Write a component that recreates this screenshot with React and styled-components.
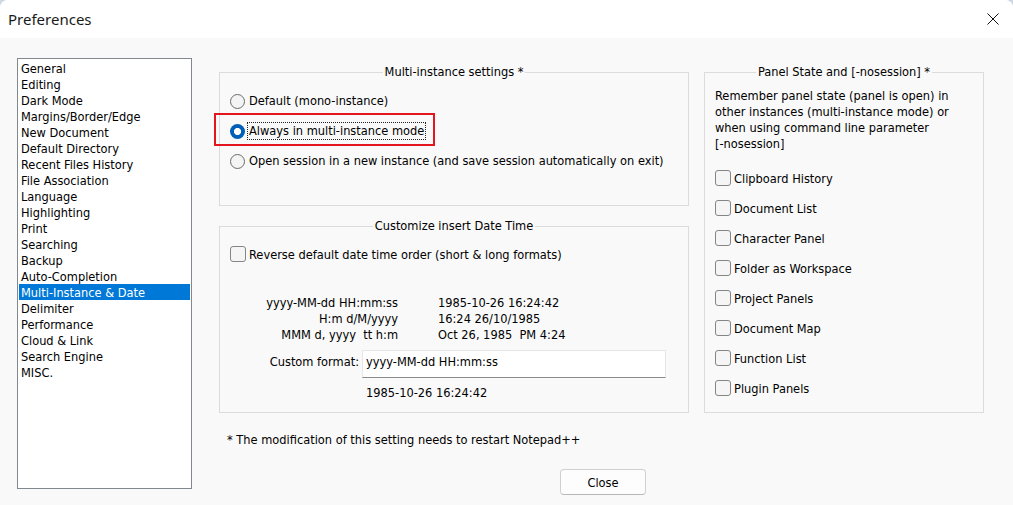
import React from 'react'
import styled, { createGlobalStyle, css } from 'styled-components'

const GlobalStyle = createGlobalStyle`
  html, body {
    margin: 0;
    padding: 0;
    background: #cfd8e0;
    overflow: hidden;
  }
  * {
    box-sizing: border-box;
  }
`

const Window = styled.div`
  width: 1013px;
  height: 505px;
  display: flex;
  flex-direction: column;
  background: #f9f9f9;
  border-radius: 8px 8px 0 0;
  overflow: hidden;
  font-family: "DejaVu Sans Condensed", "DejaVu Sans", Tahoma, sans-serif;
  font-stretch: condensed;
  font-size: 12.7px;
  color: #000;
`

const TitleBar = styled.div`
  height: 38px;
  flex-shrink: 0;
  background: #fff;
  display: flex;
  align-items: center;
  justify-content: space-between;
  padding-left: 8px;
`

const TitleText = styled.span`
  font-family: "Noto Sans", "Open Sans", sans-serif;
  font-stretch: normal;
  font-size: 15px;
  color: #1a1a1a;
`

const CloseCross = styled.div`
  width: 40px;
  height: 38px;
  display: flex;
  align-items: center;
  justify-content: center;
`

const Main = styled.div`
  flex: 1;
  display: flex;
  align-items: flex-start;
  gap: 27px;
  padding: 20px 0 0 17px;
`

const PageList = styled.ul`
  width: 175px;
  height: 431px;
  flex-shrink: 0;
  margin: 0;
  padding: 1px;
  list-style: none;
  background: #fff;
  border: 1px solid #828790;
`

const PageItem = styled.li`
  height: 16px;
  line-height: 18px;
  padding-left: 2px;
  white-space: nowrap;
  overflow: hidden;
  ${p => p.$selected && css`
    background: #0078d7;
    color: #fff;
  `}
`

const Settings = styled.div`
  width: 765px;
  margin-top: 7px;
  display: flex;
  flex-direction: column;
`

const Groups = styled.div`
  display: grid;
  grid-template-columns: 470px 280px;
  grid-template-rows: 141px 194px;
  column-gap: 15px;
  row-gap: 13px;
`

const GroupBox = styled.fieldset`
  margin: 0;
  min-width: 0;
  padding: ${p => p.$pad || '12px 10px 0'};
  border: 1px solid #dcdcdc;
  display: flex;
  flex-direction: column;
  align-items: flex-start;
  ${p => p.$tall && css`
    grid-column: 2;
    grid-row: 1 / span 2;
  `}
`

const GroupTitle = styled.legend`
  margin: 0 auto;
  padding: 0 2px;
  line-height: 14px;
`

const Options = styled.div`
  display: flex;
  flex-direction: column;
  gap: 12px;
  padding-top: 1px;
`

const OptionRow = styled.label`
  position: relative;
  align-self: flex-start;
  display: flex;
  align-items: center;
  gap: 2px;
  height: 18px;
  ${p => p.$marked && css`
    &::after {
      content: '';
      position: absolute;
      left: -16px;
      top: -9px;
      right: -9px;
      bottom: -6px;
      border: 2px solid #e3161f;
      pointer-events: none;
    }
  `}
`

const Radio = styled.span`
  width: 15px;
  height: 15px;
  border-radius: 50%;
  flex-shrink: 0;
  ${p => p.$checked
    ? css`
      background: radial-gradient(circle, #fff 0 3.2px, #005fb8 3.9px);
    `
    : css`
      border: 1px solid #6b6b6b;
      background: #f4f4f4;
    `}
`

const OptionText = styled.span`
  padding: 0 1px;
  line-height: 16px;
  white-space: nowrap;
  border: 1px dotted ${p => (p.$focused ? '#222' : 'transparent')};
`

const CheckRow = styled.label`
  display: flex;
  align-items: center;
  gap: 3px;
  height: 18px;
  white-space: nowrap;
`

const CheckBox = styled.span`
  width: 16px;
  height: 16px;
  flex-shrink: 0;
  border: 1px solid #858585;
  border-radius: 3px;
  background: #f5f5f5;
`

const Formats = styled.div`
  display: grid;
  grid-template-columns: 168px auto;
  column-gap: 40px;
  margin-top: 32px;
  line-height: 16px;
`

const FormatPattern = styled.span`
  text-align: right;
  white-space: pre;
`

const FormatSample = styled.span`
  white-space: pre;
`

const CustomRow = styled.div`
  display: flex;
  align-items: flex-start;
  gap: 3px;
  margin-top: 7px;
`

const CustomLabel = styled.span`
  width: 129px;
  padding-top: 4px;
  line-height: 16px;
  text-align: right;
  white-space: nowrap;
`

const EditBox = styled.div`
  width: 304px;
  height: 28px;
  padding: 3px 3px 0;
  line-height: 16px;
  background: #fff;
  border: 1px solid #e6e6e6;
  border-bottom-color: #8a8a8a;
`

const Preview = styled.div`
  margin: 7px 0 0 136px;
  line-height: 16px;
`

const Description = styled.p`
  width: 255px;
  margin: 1px 0 0;
  line-height: 16px;
`

const NoBreak = styled.span`
  white-space: nowrap;
`

const PanelChecks = styled.div`
  display: flex;
  flex-direction: column;
  gap: 12px;
  margin-top: 17px;
`

const Note = styled.p`
  margin: 19px 0 0 8px;
  line-height: 16px;
`

const DialogButton = styled.button`
  align-self: center;
  margin: 21px 0 0 3px;
  width: 86px;
  height: 26px;
  padding: 0;
  font: inherit;
  color: #000;
  background: #fdfdfd;
  border: 1px solid #d0d0d0;
  border-bottom-color: #b8b8b8;
  border-radius: 4px;
`

const pages = [
  'General', 'Editing', 'Dark Mode', 'Margins/Border/Edge', 'New Document',
  'Default Directory', 'Recent Files History', 'File Association', 'Language',
  'Highlighting', 'Print', 'Searching', 'Backup', 'Auto-Completion',
  'Multi-Instance & Date', 'Delimiter', 'Performance', 'Cloud & Link',
  'Search Engine', 'MISC.',
]

const formats = [
  ['yyyy-MM-dd HH:mm:ss', '1985-10-26 16:24:42'],
  ['H:m d/M/yyyy', '16:24 26/10/1985'],
  ['MMM d, yyyy  tt h:m', 'Oct 26, 1985  PM 4:24'],
]

const panels = [
  'Clipboard History', 'Document List', 'Character Panel', 'Folder as Workspace',
  'Project Panels', 'Document Map', 'Function List', 'Plugin Panels',
]

const App = () => {
  return (
    <Window>
      <GlobalStyle />
      <TitleBar>
        <TitleText>Preferences</TitleText>
        <CloseCross>
          <svg width="12" height="12" viewBox="0 0 12 12">
            <path d="M0.5 0.5 L11.5 11.5 M11.5 0.5 L0.5 11.5" stroke="#111" strokeWidth="1" fill="none" />
          </svg>
        </CloseCross>
      </TitleBar>
      <Main>
        <PageList>
          {pages.map(p => (
            <PageItem key={p} $selected={p === 'Multi-Instance & Date'}>{p}</PageItem>
          ))}
        </PageList>
        <Settings>
          <Groups>
            <GroupBox>
              <GroupTitle>Multi-instance settings *</GroupTitle>
              <Options>
                <OptionRow>
                  <Radio />
                  <OptionText>Default (mono-instance)</OptionText>
                </OptionRow>
                <OptionRow $marked>
                  <Radio $checked />
                  <OptionText $focused>Always in multi-instance mode</OptionText>
                </OptionRow>
                <OptionRow>
                  <Radio />
                  <OptionText>Open session in a new instance (and save session automatically on exit)</OptionText>
                </OptionRow>
              </Options>
            </GroupBox>
            <GroupBox $tall $pad="8px 10px 0">
              <GroupTitle>Panel State and [-nosession] *</GroupTitle>
              <Description>
                Remember panel state (panel is open) in other instances (multi-instance mode) or when using command line parameter <NoBreak>[-nosession]</NoBreak>
              </Description>
              <PanelChecks>
                {panels.map(p => (
                  <CheckRow key={p}>
                    <CheckBox />
                    {p}
                  </CheckRow>
                ))}
              </PanelChecks>
            </GroupBox>
            <GroupBox>
              <GroupTitle>Customize insert Date Time</GroupTitle>
              <CheckRow>
                <CheckBox />
                Reverse default date time order (short &amp; long formats)
              </CheckRow>
              <Formats>
                {formats.map(([pattern, sample]) => (
                  <React.Fragment key={pattern}>
                    <FormatPattern>{pattern}</FormatPattern>
                    <FormatSample>{sample}</FormatSample>
                  </React.Fragment>
                ))}
              </Formats>
              <CustomRow>
                <CustomLabel>Custom format:</CustomLabel>
                <EditBox>yyyy-MM-dd HH:mm:ss</EditBox>
              </CustomRow>
              <Preview>1985-10-26 16:24:42</Preview>
            </GroupBox>
          </Groups>
          <Note>* The modification of this setting needs to restart Notepad++</Note>
          <DialogButton>Close</DialogButton>
        </Settings>
      </Main>
    </Window>
  )
}

export default App
